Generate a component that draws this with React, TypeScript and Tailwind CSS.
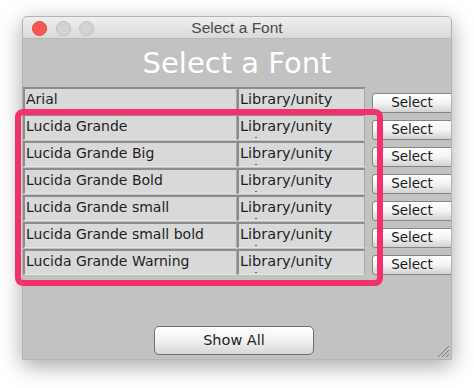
import React from "react";

const rows = [
  "Arial",
  "Lucida Grande",
  "Lucida Grande Big",
  "Lucida Grande Bold",
  "Lucida Grande small",
  "Lucida Grande small bold",
  "Lucida Grande Warning",
];

const dv = { fontFamily: '"DejaVu Sans", Verdana, sans-serif' };

export default function App() {
  return (
    <div className="relative w-[474px] h-[388px] bg-white pt-[16px] pl-[22px]">
      <div className="w-[430px] h-[344px] flex flex-col bg-[#c2c2c2] overflow-hidden rounded-t-[5px] shadow-[0_6px_22px_rgba(0,0,0,0.35)] border border-[#b4b4b4] relative">
        {/* title bar */}
        <div className="relative h-[22px] shrink-0 bg-gradient-to-b from-[#efefef] to-[#d9d9d9] border-b border-[#b9b9b9] flex items-center justify-center">
          <div className="absolute left-[9px] top-[4px] flex gap-[8.5px]">
            <div className="w-[15px] h-[15px] rounded-full bg-[#fc5753] border border-[#df4744]" />
            <div className="w-[15px] h-[15px] rounded-full bg-[#d3d3d3] border border-[#c0c0c0]" />
            <div className="w-[15px] h-[15px] rounded-full bg-[#d3d3d3] border border-[#c0c0c0]" />
          </div>
          <span className="text-[15.5px] text-[#4a4a4a] leading-none" style={{ fontFamily: '"Liberation Sans", Arial, sans-serif' }}>
            Select a Font
          </span>
        </div>
        {/* heading */}
        <div className="h-[48px] shrink-0 flex items-center justify-center">
          <span className="text-white text-[29px] leading-none" style={dv}>
            Select a Font
          </span>
        </div>
        {/* table */}
        <div className="flex flex-col gap-[1px]" style={dv}>
          {rows.map((r) => (
            <div key={r} className="h-[26px] flex shrink-0">
              <div className="w-[214px] shrink-0 h-[26px] bg-[#d9d9d9] border-t-2 border-l-2 border-[#8c8c8c] border-r border-r-[#a8a8a8] border-b border-b-[#e4e4e4] pl-[1px] pt-[2px] text-[14px] leading-[17px] text-[#1e1e1e] whitespace-nowrap overflow-hidden">
                {r}
              </div>
              <div className="relative w-[128px] shrink-0 h-[26px] bg-[#d9d9d9] border-t-2 border-l-2 border-[#8c8c8c] border-r border-r-[#a8a8a8] border-b border-b-[#e4e4e4] pl-[1px] pt-[2px] text-[14.5px] leading-[17px] text-[#1e1e1e] whitespace-nowrap overflow-hidden">
                Library/unity
                <div className="absolute left-[16px] bottom-[1px] w-[2px] h-[1px] bg-[#666]" />
              </div>
              <div className="ml-[7px] mt-[6px] w-[86px] h-[20px] shrink-0 rounded-[3px] border border-[#858585] bg-gradient-to-b from-[#ffffff] via-[#f4f4f4] to-[#d2d2d2] flex items-center justify-center text-[13.5px] text-[#1a1a1a] leading-none">
                <span className="mr-[6px]">Select</span>
              </div>
            </div>
          ))}
        </div>
        <div className="flex-1" />
        {/* bottom */}
        <div className="flex justify-center pb-[4px] pr-[6px]">
          <div className="w-[160px] h-[29px] rounded-[5px] border border-[#6e6e6e] bg-gradient-to-b from-[#ffffff] via-[#f2f2f2] to-[#d6d6d6] flex items-center justify-center text-[14.5px] text-[#222] leading-none" style={dv}>
            Show All
          </div>
        </div>
        <svg className="absolute right-[1px] bottom-[1px]" width="14" height="14" viewBox="0 0 14 14">
          <line x1="2" y1="13" x2="13" y2="2" stroke="#7a7a7a" strokeWidth="1" />
          <line x1="6" y1="13" x2="13" y2="6" stroke="#7a7a7a" strokeWidth="1" />
          <line x1="10" y1="13" x2="13" y2="10" stroke="#7a7a7a" strokeWidth="1" />
        </svg>
      </div>
      {/* pink annotation */}
      <div className="absolute left-[15px] top-[109px] w-[368px] h-[177px] border-[6px] border-[#f2306c] rounded-[8px]" />
    </div>
  );
}
